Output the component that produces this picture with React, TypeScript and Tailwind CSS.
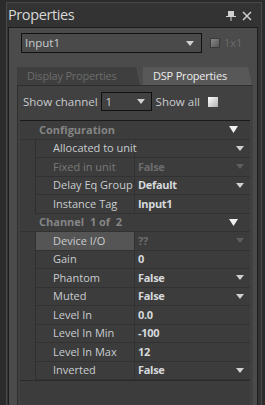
const font = { fontFamily: '"Open Sans", "Noto Sans", sans-serif' };

function Arrow({ dim = false }: { dim?: boolean }) {
  return (
    <svg width="8" height="5" viewBox="0 0 8 5" className="shrink-0">
      <path d="M0 0 H8 L4 5 Z" fill={dim ? '#5f5f5f' : '#d0d0d0'} />
    </svg>
  );
}

function CatArrow() {
  return (
    <svg width="9" height="7" viewBox="0 0 9 7">
      <path d="M0 0 H9 L4.5 7 Z" fill="#f0f0f0" />
    </svg>
  );
}

type Row = { name: string; value?: string; arrow?: boolean; disabled?: boolean; selected?: boolean };

const config: Row[] = [
  { name: 'Allocated to unit', value: '', arrow: true },
  { name: 'Fixed in unit', value: 'False', arrow: true, disabled: true },
  { name: 'Delay Eq Group', value: 'Default', arrow: true },
  { name: 'Instance Tag', value: 'Input1' },
];

const channel: Row[] = [
  { name: 'Device I/O', value: '??', arrow: true, disabled: true, selected: true },
  { name: 'Gain', value: '0' },
  { name: 'Phantom', value: 'False', arrow: true },
  { name: 'Muted', value: 'False', arrow: true },
  { name: 'Level In', value: '0.0' },
  { name: 'Level In Min', value: '-100' },
  { name: 'Level In Max', value: '12' },
  { name: 'Inverted', value: 'False', arrow: true },
];

function Category({ label }: { label: string }) {
  return (
    <div className="flex h-[18.5px] items-center justify-between border-b border-[#323232] pl-[19px] pr-[12px]">
      <span className="whitespace-pre text-[11px] font-bold text-[#858585]">{label}</span>
      <CatArrow />
    </div>
  );
}

function PropRow({ row }: { row: Row }) {
  return (
    <div className="flex h-[18.5px]">
      <div className="w-[16px] shrink-0 border-r border-[#2f2f2f]" />
      <div
        className={`flex w-[99px] shrink-0 items-center border-b border-r border-[#323232] pl-[17px] text-[11px] ${
          row.selected ? 'bg-[#555555]' : ''
        } ${row.disabled && !row.selected ? 'text-[#7a7a7a]' : 'text-[#c9ccd0]'}`}
      >
        <span className="whitespace-nowrap">{row.name}</span>
      </div>
      <div className="flex flex-1 items-center justify-between border-b border-[#323232] pl-[3px] pr-[6px]">
        <span className={`text-[11px] font-bold tracking-[-0.3px] ${row.disabled ? 'text-[#6c6c6c]' : 'text-[#d6d9dc]'}`}>
          {row.value}
        </span>
        {row.arrow && <Arrow dim={row.disabled} />}
      </div>
    </div>
  );
}

export default function App() {
  return (
    <div className="h-[405px] w-[265px] overflow-hidden bg-[#2b2b2b] px-[6px] pt-[2px]" style={font}>
      <div className="flex h-[420px] w-[256px] flex-col border border-[#484848] bg-[#333333]">
        {/* title bar */}
        <div className="flex h-[24px] shrink-0 items-center justify-between pl-[1px] pr-[9px]">
          <span className="text-[14.5px] leading-none tracking-[-0.4px] text-[#d8d8d8]">Properties</span>
          <div className="flex items-center gap-[6px] pt-[2px]">
            <svg width="10" height="10" viewBox="0 0 10 10">
              <rect x="2" y="0" width="6" height="5" fill="#d0d0d0" />
              <rect x="0" y="5" width="10" height="1" fill="#d0d0d0" />
              <rect x="4.5" y="6" width="1" height="4" fill="#d0d0d0" />
            </svg>
            <svg width="10" height="10" viewBox="0 0 10 10">
              <path d="M1 1 L9 9 M9 1 L1 9" stroke="#cfcfcf" strokeWidth="1.5" />
            </svg>
          </div>
        </div>

        {/* panel */}
        <div className="ml-[1px] mr-[3px] flex flex-1 flex-col border border-[#1c1c1c] bg-[#4b4b4b] pl-[8px] pr-[4px] pt-[5px]">
          <div className="flex items-center pl-[4px]">
            <div className="flex h-[20px] w-[181px] items-center justify-between border border-[#111111] bg-[#4a4a4a] pl-[3px] pr-[7px]">
              <span className="text-[11.5px] text-[#c8ccd0]">Input1</span>
              <Arrow />
            </div>
            <div className="ml-[8px] h-[10px] w-[10px] border border-[#3a3a3a] bg-gradient-to-br from-[#8a8a8a] to-[#555555]" />
            <span className="ml-[4px] text-[11px] text-[#6a6a6a]">1x1</span>
          </div>

          {/* tabs */}
          <div className="mt-[14px] flex h-[18px] items-end gap-[3px]">
            <div className="flex h-[18px] w-[123px] items-center bg-[#3f3f3f] pl-[10px] text-[11px] tracking-[-0.2px] text-[#6c6c6c] [clip-path:polygon(0_0,calc(100%-4px)_0,100%_100%,0_100%)]">
              Display Properties
            </div>
            <div className="flex h-[18px] w-[109px] items-center bg-[#585858] pl-[10px] text-[11px] tracking-[-0.2px] text-[#ececec] [clip-path:polygon(0_0,calc(100%-4px)_0,100%_100%,0_100%)]">
              DSP Properties
            </div>
          </div>

          {/* tab content */}
          <div className="flex w-[236px] flex-1 flex-col border-l border-t border-[#2e2e2e] bg-[#414141] pl-[2px] pr-[2px]">
            <div className="flex h-[34px] items-center pb-[3px] pl-[3px]">
              <span className="text-[11.5px] text-[#c9ccd0]">Show channel</span>
              <div className="ml-[3px] flex h-[19px] w-[51px] items-center justify-between border border-[#111111] pl-[4px] pr-[6px]">
                <span className="text-[11.5px] text-[#c9ccd0]">1</span>
                <Arrow />
              </div>
              <span className="ml-[4px] text-[11.5px] text-[#c9ccd0]">Show all</span>
              <div className="ml-[8px] h-[10px] w-[10px] bg-gradient-to-br from-[#ffffff] to-[#b0b0b0]" />
            </div>

            {/* property grid */}
            <div className="flex w-[230px] flex-1 flex-col border-t border-[#1a1a1a] bg-[#3c3c3c]">
              <Category label="Configuration" />
              {config.map((r) => (
                <PropRow key={r.name} row={r} />
              ))}
              <Category label="Channel  1 of  2" />
              {channel.map((r) => (
                <PropRow key={r.name} row={r} />
              ))}
              <div className="flex-1 border-t border-[#2c2c2c]" />
            </div>
          </div>
        </div>
      </div>
    </div>
  );
}
